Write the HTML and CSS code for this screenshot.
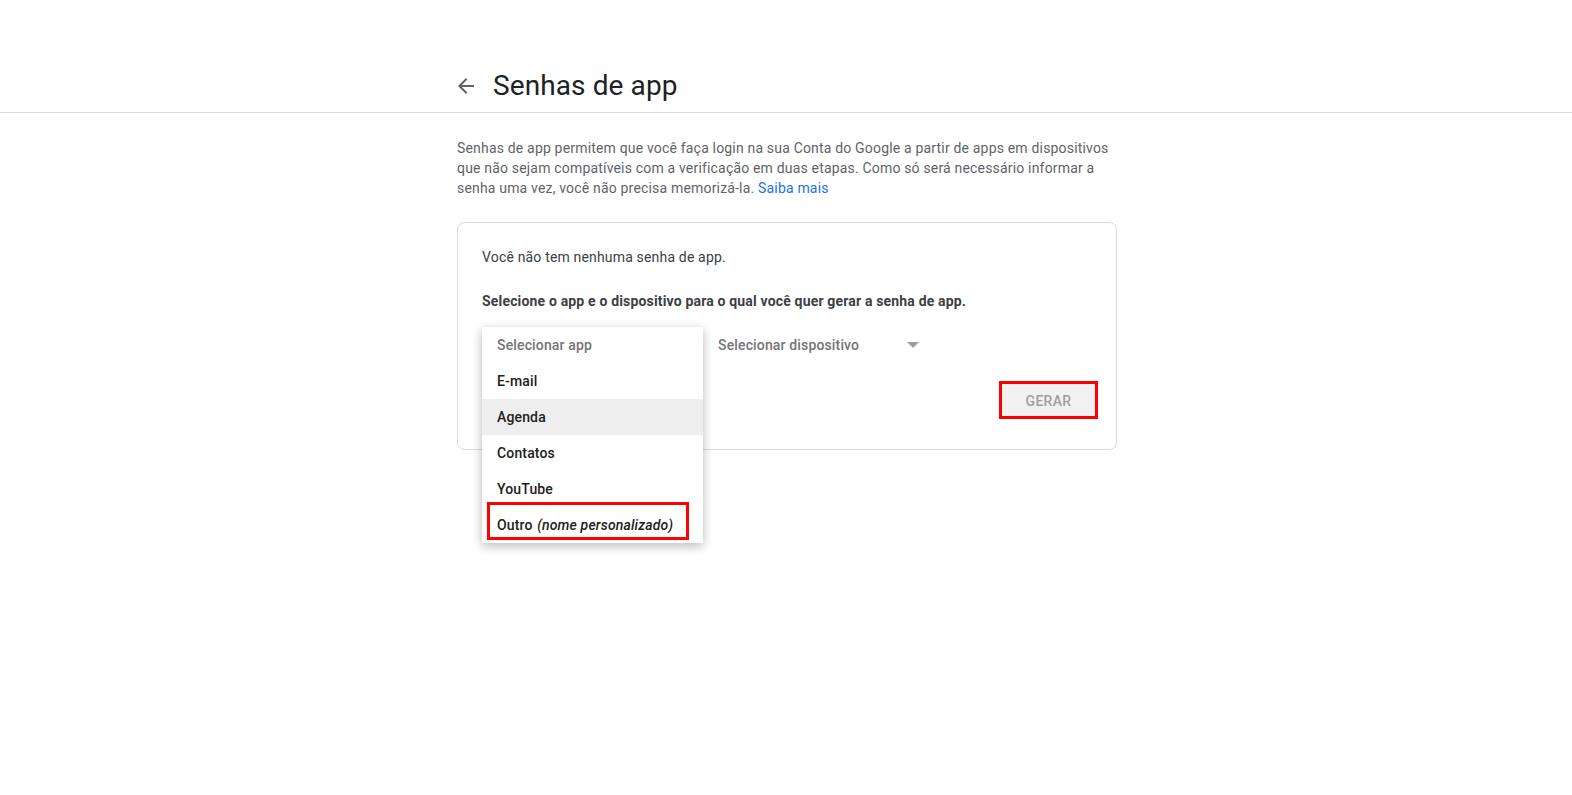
FILE: index.html
```html
<!DOCTYPE html>
<html lang="pt-BR">
<head>
    <meta charset="UTF-8">
    <meta name="viewport" content="width=device-width, initial-scale=1.0">
    <title>Senhas de app</title>
    <link rel="stylesheet" href="styles.css">
</head>
<body>
    <header class="header">
        <div class="container header-row">
            <a class="back" href="#">
                <svg width="24" height="24" viewBox="0 0 24 24"><path d="M20 11H7.83l5.59-5.59L12 4l-8 8 8 8 1.41-1.41L7.83 13H20v-2z" fill="#5f6368"/></svg>
            </a>
            <h1>Senhas de app</h1>
        </div>
    </header>
    <main class="container page">
        <p class="intro">Senhas de app permitem que você faça login na sua Conta do Google a partir de apps em dispositivos que não sejam compatíveis com a verificação em duas etapas. Como só será necessário informar a senha uma vez, você não precisa memorizá-la. <a href="#">Saiba mais</a></p>

        <div class="card">
            <p class="empty">Você não tem nenhuma senha de app.</p>
            <p class="hint">Selecione o app e o dispositivo para o qual você quer gerar a senha de app.</p>

            <div class="selects">
                <div class="select app-select">
                    <span>Selecionar app</span>
                    <ul class="menu">
                        <li class="placeholder">Selecionar app</li>
                        <li>E-mail</li>
                        <li class="active">Agenda</li>
                        <li>Contatos</li>
                        <li>YouTube</li>
                        <li class="marked">Outro <em>(nome personalizado)</em></li>
                    </ul>
                </div>
                <div class="select device-select">
                    <span>Selecionar dispositivo</span>
                    <i class="caret"></i>
                </div>
            </div>

            <div class="actions">
                <div class="mark-box">
                    <button class="btn" disabled>GERAR</button>
                </div>
            </div>
        </div>
    </main>
</body>
</html>
```

FILE: styles.css
```css
html, body {
    min-height: 795px;
}

body {
    font-family: Roboto, "Noto Sans", Arial, sans-serif;
    margin: 0;
    padding: 0;
    background: #fff;
    color: #3c4043;
}

.container {
    width: 658px;
    margin: 0 auto;
}

.page {
    padding-bottom: 200px;
}

.header {
    border-bottom: 1px solid #dadce0;
    padding-top: 66px;
    height: 46px;
    box-sizing: content-box;
}

.header-row {
    display: flex;
    align-items: center;
    height: 40px;
}

.back {
    display: flex;
    width: 24px;
    height: 24px;
    margin-left: -3px;
    margin-right: 15px;
}

.header h1 {
    margin: 0;
    font-size: 28px;
    font-weight: 400;
    color: #202124;
    line-height: 40px;
    letter-spacing: 0.1px;
}

.intro {
    margin: 25px 0 0;
    font-size: 14px;
    line-height: 20px;
    color: #5f6368;
    letter-spacing: 0.18px;
}

.intro a {
    color: #1a73e8;
    text-decoration: none;
}

.card {
    margin-top: 24px;
    margin-right: -2px;
    border: 1px solid #dadce0;
    border-radius: 8px;
    padding: 24px 18px 30px 24px;
}

.card p {
    margin: 0;
    font-size: 14px;
    line-height: 20px;
    color: #3c4043;
    letter-spacing: 0.17px;
}

.card .hint {
    margin-top: 24px;
    font-weight: 700;
}

.selects {
    display: flex;
    margin-top: 16px;
    height: 36px;
}

.select {
    position: relative;
    display: flex;
    align-items: center;
    width: 220px;
    padding: 0 4px 0 15px;
    box-sizing: border-box;
    font-size: 14px;
    font-weight: 500;
    color: #757575;
    letter-spacing: 0.15px;
}

.app-select {
    width: 221px;
}

.device-select {
    justify-content: space-between;
}

.caret {
    width: 0;
    height: 0;
    border-left: 6px solid transparent;
    border-right: 6px solid transparent;
    border-top: 6px solid #9e9e9e;
}

.menu {
    position: absolute;
    top: 0;
    left: 0;
    width: 221px;
    margin: 0;
    padding: 0;
    list-style: none;
    background: #fff;
    box-shadow: 0 3px 10px rgba(0, 0, 0, 0.28);
    z-index: 2;
}

.menu li {
    position: relative;
    height: 36px;
    line-height: 36px;
    padding-left: 15px;
    font-size: 14px;
    font-weight: 500;
    color: #212121;
}

.menu .placeholder {
    color: #757575;
}

.menu .active {
    background: #eeeeee;
}

.menu em {
    font-style: italic;
    padding-left: 1px;
}

.menu .marked::after {
    content: "";
    position: absolute;
    left: 5px;
    top: -5px;
    width: 202px;
    height: 38px;
    border: 3px solid #ff0000;
    box-sizing: border-box;
}

.actions {
    display: flex;
    justify-content: flex-end;
    margin-top: 18px;
}

.mark-box {
    border: 3px solid #ff0000;
    width: 99px;
    height: 38px;
    box-sizing: border-box;
    display: flex;
}

.btn {
    flex: 1;
    border: none;
    background: #f1f1f1;
    color: #9e9e9e;
    font-family: Roboto, Arial, sans-serif;
    font-size: 14px;
    font-weight: 500;
    letter-spacing: 0.3px;
    padding: 2px 0 0;
    margin: 0;
}
```
